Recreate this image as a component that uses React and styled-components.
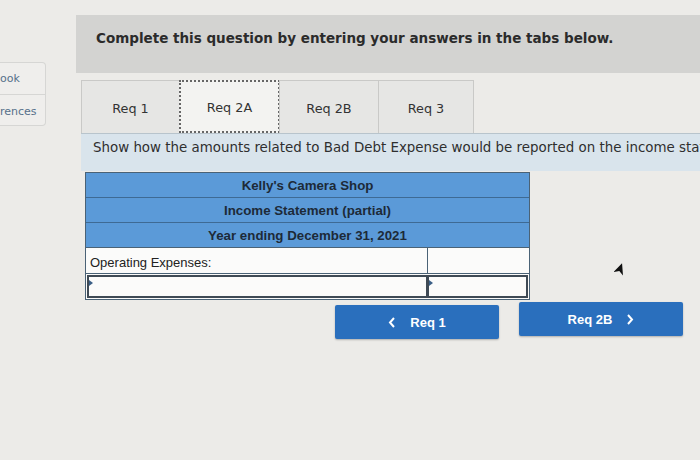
import styled, { createGlobalStyle } from 'styled-components';

const Global = createGlobalStyle`
  html, body {
    margin: 0;
    padding: 0;
    background: #ecebe8;
    overflow: hidden;
  }
  body {
    width: 700px;
    height: 460px;
  }
`;

const Page = styled.div`
  position: relative;
  display: flex;
  width: 700px;
  height: 460px;
  overflow: hidden;
  font-family: "DejaVu Sans", Verdana, sans-serif;
`;

const Sidebar = styled.div`
  width: 45px;
  margin-top: 62px;
  align-self: flex-start;
  border: 1px solid #d6d6d4;
  border-left: none;
  border-radius: 0 4px 4px 0;
  background: #efeeec;
`;

const SideItem = styled.div`
  height: 31px;
  display: flex;
  align-items: center;
  padding-top: ${p => (p.first ? 0 : 2)}px;
  box-sizing: border-box;
  font-size: 11px;
  color: #56708a;
  border-top: ${p => (p.first ? 'none' : '1px solid #d6d6d4')};
  white-space: nowrap;
  overflow: hidden;
`;

const Main = styled.div`
  flex: 1;
  margin-left: 30px;
  padding-top: 15px;
  min-width: 0;
`;

const Header = styled.div`
  height: 58px;
  background: #d3d3d1;
  padding: 15px 0 0 20px;
  box-sizing: border-box;
`;

const Title = styled.div`
  font-weight: bold;
  font-size: 13.5px;
  color: #2b2b2b;
  white-space: nowrap;
`;

const Tabs = styled.div`
  display: flex;
  margin: 7px 0 0 5px;
`;

const Tab = styled.div`
  width: ${p => p.w}px;
  height: 53px;
  box-sizing: border-box;
  display: flex;
  align-items: center;
  justify-content: center;
  padding-top: 2px;
  font-size: 12.8px;
  color: #333;
  background: ${p => (p.active ? '#f3f3f1' : '#e6e6e4')};
  border: ${p => (p.active ? '2px dotted #666' : '1px solid #c9c9c7')};
  border-bottom: ${p => (p.active ? '2px dotted #666' : 'none')};
  margin-left: ${p => (p.first ? 0 : -1)}px;
`;

const Panel = styled.div`
  margin-left: 5px;
  height: 38px;
  background: #d9e4ec;
  border-top: 1px solid #b8c4cc;
  padding: 6px 0 0 12px;
  box-sizing: border-box;
  font-size: 13.4px;
  color: #2f2f2f;
  white-space: nowrap;
  overflow: hidden;
`;

const Table = styled.div`
  margin: 1px 0 0 9px;
  width: 443px;
  border: 1px solid #4a6276;
`;

const HeadRow = styled.div`
  height: 24px;
  background: #5b9ad8;
  border-top: ${p => (p.first ? 'none' : '1px solid #3e6a94')};
  display: flex;
  align-items: center;
  justify-content: center;
  font-family: "Liberation Sans", Arial, sans-serif;
  font-weight: bold;
  font-size: 13.3px;
  color: #1d2a38;
`;

const Row = styled.div`
  display: flex;
  height: 25px;
  background: #fbfbfa;
  border-top: 1px solid #4a6276;
`;

const Cell = styled.div`
  flex: ${p => (p.wide ? '0 0 341px' : '1')};
  box-sizing: border-box;
  display: flex;
  align-items: center;
  padding: 4px 0 0 4px;
  font-family: "Liberation Sans", Arial, sans-serif;
  font-size: 13px;
  color: #222;
  border-left: ${p => (p.wide ? 'none' : '1px solid #4a6276')};
  position: relative;
`;

const InputCell = styled(Cell)`
  border: 2px solid #3f4a55;
  border-left-width: ${p => (p.wide ? 2 : 1)}px;
  margin: 1px ${p => (p.wide ? 0 : 1)}px 1px ${p => (p.wide ? 1 : 0)}px;
  &::before {
    content: '';
    position: absolute;
    left: 0;
    top: 3px;
    border-left: 4px solid #3b5f86;
    border-top: 3px solid transparent;
    border-bottom: 3px solid transparent;
  }
`;

const Nav = styled.div`
  display: flex;
  gap: 20px;
  margin: 2px 0 0 259px;
`;

const NavButton = styled.div`
  width: 164px;
  height: 34px;
  margin-top: ${p => p.offset}px;
  background: #2a6fbd;
  border-radius: 2px;
  box-shadow: 0 1px 2px rgba(0, 0, 0, 0.25);
  display: flex;
  align-items: center;
  justify-content: center;
  gap: 14px;
  font-family: "Liberation Sans", Arial, sans-serif;
  font-weight: bold;
  font-size: 13px;
  color: #ffffff;
`;

const Chevron = ({ dir }) => (
  <svg width="8" height="11" viewBox="0 0 8 11">
    <path
      d={dir === 'left' ? 'M6 1 L2 5.5 L6 10' : 'M2 1 L6 5.5 L2 10'}
      fill="none"
      stroke="#fff"
      strokeWidth="2"
    />
  </svg>
);

const Cursor = styled.svg`
  position: absolute;
  left: 614px;
  top: 262px;
`;

const App = () => {
  return (
    <>
      <Global />
      <Page>
        <Sidebar>
          <SideItem first>ook</SideItem>
          <SideItem>rences</SideItem>
        </Sidebar>
        <Main>
          <Header>
            <Title>Complete this question by entering your answers in the tabs below.</Title>
          </Header>
          <Tabs>
            <Tab first w={99}>Req 1</Tab>
            <Tab active w={101}>Req 2A</Tab>
            <Tab w={100}>Req 2B</Tab>
            <Tab w={96}>Req 3</Tab>
          </Tabs>
          <Panel>Show how the amounts related to Bad Debt Expense would be reported on the income statement.</Panel>
          <Table>
            <HeadRow first>Kelly's Camera Shop</HeadRow>
            <HeadRow>Income Statement (partial)</HeadRow>
            <HeadRow>Year ending December 31, 2021</HeadRow>
            <Row>
              <Cell wide>Operating Expenses:</Cell>
              <Cell />
            </Row>
            <Row>
              <InputCell wide />
              <InputCell />
            </Row>
          </Table>
          <Nav>
            <NavButton offset={3}>
              <Chevron dir="left" />
              Req 1
            </NavButton>
            <NavButton offset={0}>
              Req 2B
              <Chevron dir="right" />
            </NavButton>
          </Nav>
        </Main>
        <Cursor width="12" height="14" viewBox="0 0 12 14">
          <path d="M6 1 L11 12 L6 9 L1 12 Z" fill="#111" transform="rotate(20 6 7)" />
        </Cursor>
      </Page>
    </>
  );
};

export default App;
